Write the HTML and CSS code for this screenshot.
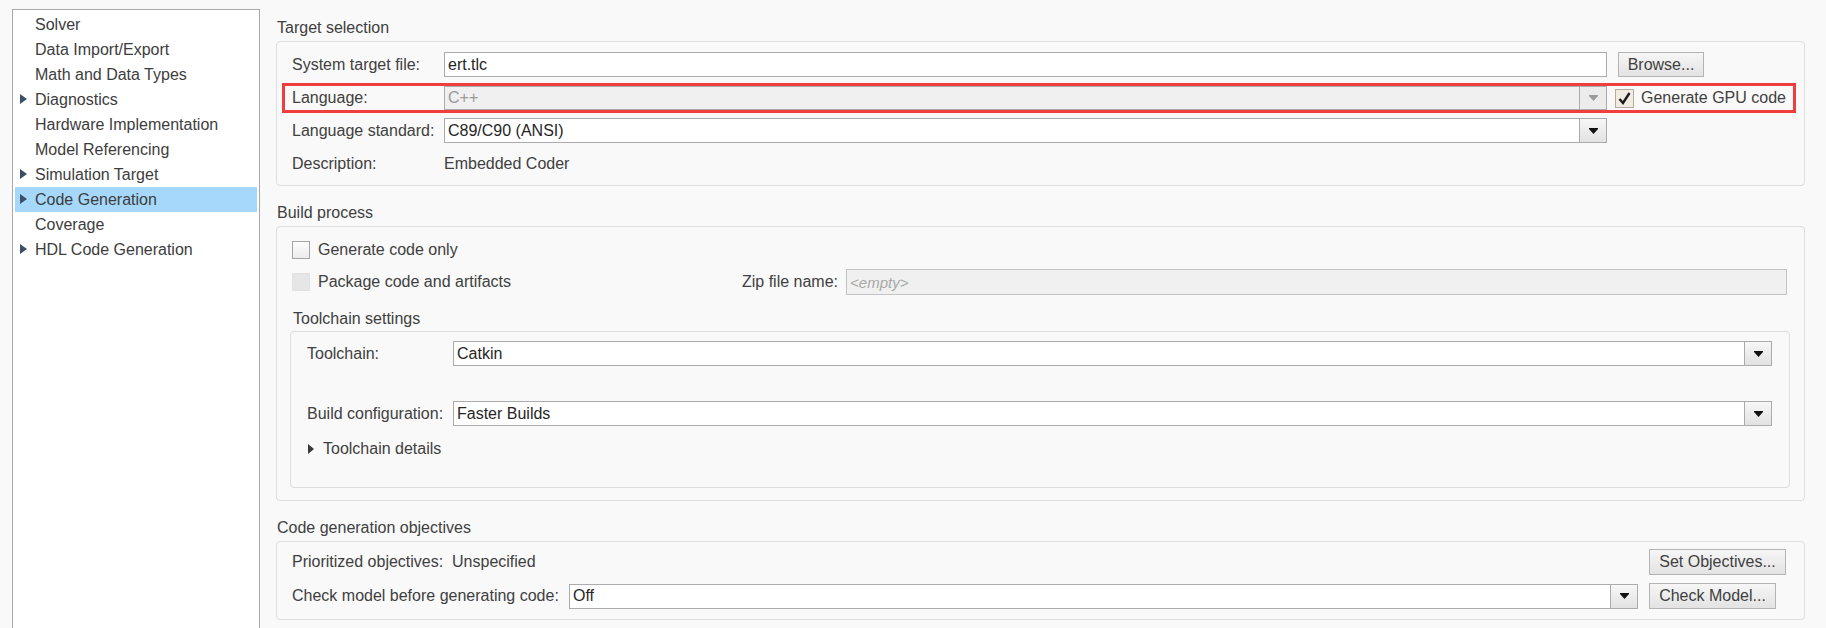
FILE: index.html
```html
<!DOCTYPE html>
<html lang="en">
<head>
    <meta charset="UTF-8" />
    <title>Configuration Parameters - Code Generation</title>
    <link rel="stylesheet" href="styles.css">
</head>
<body>

<div class="tree">
    <div class="tree-item">Solver</div>
    <div class="tree-item">Data Import/Export</div>
    <div class="tree-item">Math and Data Types</div>
    <div class="tree-item has-kids"><span class="twisty"></span>Diagnostics</div>
    <div class="tree-item">Hardware Implementation</div>
    <div class="tree-item">Model Referencing</div>
    <div class="tree-item has-kids"><span class="twisty"></span>Simulation Target</div>
    <div class="tree-item has-kids selected"><span class="twisty"></span>Code Generation</div>
    <div class="tree-item">Coverage</div>
    <div class="tree-item has-kids"><span class="twisty"></span>HDL Code Generation</div>
</div>

<div class="main">
    <div class="section-title first">Target selection</div>
    <div class="group target">
        <div class="row row-stf">
            <div class="label">System target file:</div>
            <div class="field text">ert.tlc</div>
            <button class="btn browse">Browse...</button>
        </div>
        <div class="highlight">
            <div class="label">Language:</div>
            <div class="field combo disabled">
                <span class="value">C++</span>
                <span class="arrow"><svg width="9" height="6" viewBox="0 0 9 6"><path d="M0 0H9V1L4.5 6L0 1Z" fill="#9a9a9a"/></svg></span>
            </div>
            <span class="check checked"><svg width="17" height="17" viewBox="0 0 17 17"><path d="M3.5 9L7 13L13.5 3" fill="none" stroke="#1e1e1e" stroke-width="2.4"/></svg></span>
            <span class="check-label">Generate GPU code</span>
        </div>
        <div class="row row-std">
            <div class="label">Language standard:</div>
            <div class="field combo">
                <span class="value">C89/C90 (ANSI)</span>
                <span class="arrow"><svg width="9" height="6" viewBox="0 0 9 6"><path d="M0 0H9V1L4.5 6L0 1Z" fill="#111"/></svg></span>
            </div>
        </div>
        <div class="row row-desc">
            <div class="label">Description:</div>
            <div class="plain">Embedded Coder</div>
        </div>
    </div>

    <div class="section-title">Build process</div>
    <div class="group build">
        <div class="row row-gen">
            <span class="check"></span>
            <span class="check-label">Generate code only</span>
        </div>
        <div class="row row-pkg">
            <div class="pkg">
                <span class="check disabled"></span>
                <span class="check-label">Package code and artifacts</span>
            </div>
            <div class="zip-label">Zip file name:</div>
            <div class="field text disabled zip"><em>&lt;empty&gt;</em></div>
        </div>
        <div class="sub-title">Toolchain settings</div>
        <div class="group inner">
            <div class="row row-tc">
                <div class="label">Toolchain:</div>
                <div class="field combo">
                    <span class="value">Catkin</span>
                    <span class="arrow"><svg width="9" height="6" viewBox="0 0 9 6"><path d="M0 0H9V1L4.5 6L0 1Z" fill="#111"/></svg></span>
                </div>
            </div>
            <div class="row row-bc">
                <div class="label">Build configuration:</div>
                <div class="field combo">
                    <span class="value">Faster Builds</span>
                    <span class="arrow"><svg width="9" height="6" viewBox="0 0 9 6"><path d="M0 0H9V1L4.5 6L0 1Z" fill="#111"/></svg></span>
                </div>
            </div>
            <div class="row row-details">
                <span class="twisty small"></span>
                <span>Toolchain details</span>
            </div>
        </div>
    </div>

    <div class="section-title">Code generation objectives</div>
    <div class="group objectives">
        <div class="row row-prio">
            <span class="plain">Prioritized objectives:&nbsp; Unspecified</span>
            <button class="btn set-obj">Set Objectives...</button>
        </div>
        <div class="row row-chk">
            <div class="label chk-label">Check model before generating code:</div>
            <div class="field combo chk-field">
                <span class="value">Off</span>
                <span class="arrow"><svg width="9" height="6" viewBox="0 0 9 6"><path d="M0 0H9V1L4.5 6L0 1Z" fill="#111"/></svg></span>
            </div>
            <button class="btn chk-model">Check Model...</button>
        </div>
    </div>
</div>

</body>
</html>
```

FILE: styles.css
```css
body {
    margin: 0;
    height: 628px;
    overflow: hidden;
    background-color: #f9f9f9;
    font-family: "Liberation Sans", Arial, sans-serif;
    font-size: 16px;
    color: #404040;
    display: flex;
    align-items: flex-start;
}

/* left tree */
.tree {
    margin: 9px 0 0 12px;
    width: 248px;
    height: 640px;
    box-sizing: border-box;
    background-color: #fff;
    border: 1px solid #a9a9a9;
    padding: 2px 2px 0 2px;
    flex: none;
}

.tree-item {
    position: relative;
    height: 25px;
    line-height: 25px;
    padding-left: 20px;
    color: #3d3d3d;
    white-space: nowrap;
}

.tree-item.selected {
    background-color: #a5d8fa;
}

.twisty {
    position: absolute;
    left: 5px;
    top: 7px;
    width: 0;
    height: 0;
    border-top: 5px solid transparent;
    border-bottom: 5px solid transparent;
    border-left: 7px solid #3b4f66;
}

.twisty.small {
    position: static;
    display: inline-block;
    border-top-width: 5px;
    border-bottom-width: 5px;
    border-left: 6px solid #3a3a3a;
    margin-right: 9px;
}

/* right side */
.main {
    margin-left: 16px;
    width: 1529px;
    padding-top: 18px;
}

.section-title {
    height: 20px;
    line-height: 20px;
    margin: 17px 0 3px 1px;
    color: #404040;
}

.section-title.first {
    margin-top: 0;
}

.group {
    border: 1px solid #dedede;
    border-radius: 4px;
    background-color: #f9f9f9;
}

.row {
    display: flex;
    align-items: center;
}

.label {
    width: 152px;
    flex: none;
    white-space: nowrap;
}

.field {
    box-sizing: border-box;
    height: 25px;
    border: 1px solid #ababab;
    background-color: #fff;
    color: #262626;
    display: flex;
    align-items: center;
    flex: none;
}

.field.text {
    padding-left: 3px;
}

.field.disabled {
    background-color: #f0f0f0;
    color: #9a9a9a;
}

.combo .value {
    flex: 1;
    padding-left: 3px;
}

.combo .arrow {
    width: 27px;
    height: 100%;
    box-sizing: border-box;
    border-left: 1px solid #ababab;
    background: linear-gradient(#f7f7f7, #e2e2e2);
    display: flex;
    align-items: center;
    justify-content: center;
}

.combo.disabled .arrow {
    background: #ececec;
}

.btn {
    box-sizing: border-box;
    height: 26px;
    border: 1px solid #b4b4b4;
    background: linear-gradient(#f6f6f6, #e3e3e3);
    font-family: "Liberation Sans", Arial, sans-serif;
    font-size: 16px;
    color: #404040;
    padding: 0 8px;
    flex: none;
}

.check {
    box-sizing: border-box;
    width: 18px;
    height: 18px;
    border: 1px solid #a5a5a5;
    background: linear-gradient(#fdfdfd, #ececec);
    flex: none;
    display: flex;
    align-items: center;
    justify-content: center;
}

.check.disabled {
    border-color: #e2e2e2;
    background: #e6e6e6;
}

.check.checked {
    width: 19px;
    height: 19px;
    border-color: #b5aca0;
    background: #f1ebe2;
}

.check-label {
    margin-left: 8px;
    white-space: nowrap;
}

/* target selection */
.target {
    padding: 10px 0 9px 15px;
}

.row-stf {
    height: 25px;
}

.row-stf .field {
    width: 1163px;
}

.browse {
    margin-left: 11px;
    width: 86px;
    height: 25px;
}

.highlight {
    display: flex;
    align-items: center;
    box-sizing: border-box;
    width: 1514px;
    height: 30px;
    margin: 6px 0 5px -10px;
    border: 3px solid #f03e3e;
    padding-left: 7px;
}

.highlight .field {
    width: 1163px;
    height: 24px;
}

.highlight .check {
    margin-left: 8px;
}

.highlight .check-label {
    margin-left: 7px;
}

.row-std .field {
    width: 1163px;
}

.row-desc {
    height: 25px;
    margin-top: 8px;
}

/* build process */
.build {
    padding: 11px 14px 12px 13px;
}

.row-gen {
    height: 24px;
    padding-left: 2px;
}

.row-pkg {
    height: 26px;
    margin-top: 7px;
    padding-left: 2px;
}

.pkg {
    display: flex;
    align-items: center;
    width: 450px;
    flex: none;
}

.zip-label {
    white-space: nowrap;
    margin-right: 8px;
}

.zip {
    flex: 1;
    height: 26px;
    border-color: #c4c4c4;
    margin-right: 3px;
}

.zip em {
    color: #a8a8a8;
    font-size: 15px;
}

.sub-title {
    height: 20px;
    line-height: 20px;
    margin: 14px 0 2px 3px;
}

.inner {
    padding: 9px 17px 28px 16px;
}

.inner .label {
    width: 146px;
}

.inner .field {
    flex: 1;
}

.row-bc {
    margin-top: 35px;
}

.row-details {
    height: 20px;
    margin-top: 13px;
    padding-left: 1px;
}

/* objectives */
.objectives {
    padding: 7px 18px 10px 15px;
}

.row-prio {
    height: 26px;
    justify-content: space-between;
}

.set-obj {
    width: 137px;
}

.row-chk {
    height: 26px;
    margin-top: 8px;
}

.chk-label {
    width: 277px;
}

.chk-field {
    width: 1069px;
}

.chk-model {
    margin-left: 11px;
    width: 127px;
}
```
